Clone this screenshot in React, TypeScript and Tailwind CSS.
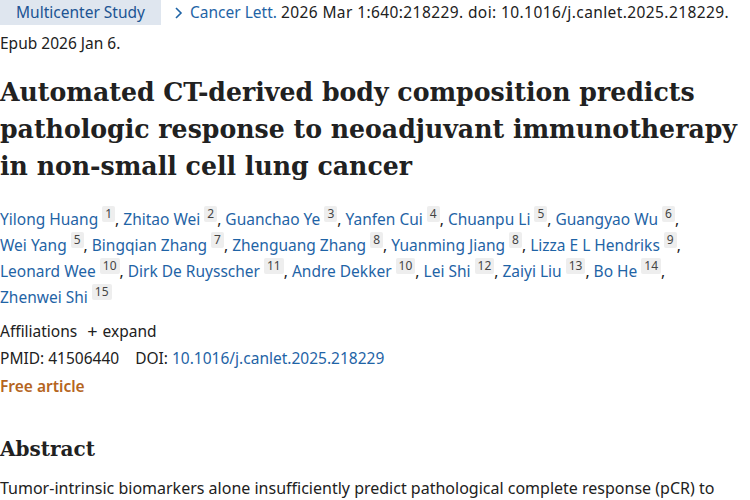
import React from "react";

const authors: [string, string][] = [
  ["Yilong Huang", "1"],
  ["Zhitao Wei", "2"],
  ["Guanchao Ye", "3"],
  ["Yanfen Cui", "4"],
  ["Chuanpu Li", "5"],
  ["Guangyao Wu", "6"],
  ["Wei Yang", "5"],
  ["Bingqian Zhang", "7"],
  ["Zhenguang Zhang", "8"],
  ["Yuanming Jiang", "8"],
  ["Lizza E L Hendriks", "9"],
  ["Leonard Wee", "10"],
  ["Dirk De Ruysscher", "11"],
  ["Andre Dekker", "10"],
  ["Lei Shi", "12"],
  ["Zaiyi Liu", "13"],
  ["Bo He", "14"],
  ["Zhenwei Shi", "15"],
];

const lines = [authors.slice(0, 6), authors.slice(6, 11), authors.slice(11, 17), authors.slice(17)];

function Author({ name, sup, last }: { name: string; sup: string; last: boolean }) {
  return (
    <span className="whitespace-nowrap">
      <span className="text-[#1f64a6]">{name}</span>{" "}
      <span className="relative top-[-7px] inline-block rounded-[2px] bg-[#eeeeee] px-[3px] text-[12px] leading-[16px] text-[#444]">
        {sup}
      </span>
      {last ? "" : ","}
    </span>
  );
}

export default function App() {
  return (
    <div className="h-[500px] w-[750px] overflow-hidden bg-white font-['Noto_Sans',sans-serif] text-[15.5px] text-[#212121]">
      <div className="flex h-[25px] items-center whitespace-nowrap">
        <span className="flex h-[25px] w-[161px] items-center justify-center bg-[#dfe6ef] text-[#205493]">
          Multicenter Study
        </span>
        <span className="ml-[13px] flex items-center">
          <svg width="10" height="14" viewBox="0 0 10 14" className="mr-[6px]">
            <path d="M2 2 L7 7 L2 12" fill="none" stroke="#1f64a6" strokeWidth="1.6" />
          </svg>
          <span className="text-[#1f64a6]">Cancer Lett.</span>
          <span className="ml-[4px] tracking-[0.4px]">2026 Mar 1:640:218229. doi: 10.1016/j.canlet.2025.218229.</span>
        </span>
      </div>
      <div className="mt-[7px] leading-[22px]">Epub 2026 Jan 6.</div>

      <h1 className="mt-[20px] whitespace-nowrap font-['DejaVu_Serif',serif] text-[25.2px] font-bold leading-[37px] text-[#212121]">
        Automated CT-derived body composition predicts
        <br />
        pathologic response to neoadjuvant immunotherapy
        <br />
        in non-small cell lung cancer
      </h1>

      <div className="mt-[21px] leading-[26px]">
        {lines.map((ln, i) => (
          <div key={i} className="whitespace-nowrap">
            {ln.map(([n, s], j) => {
              const isLast = i === lines.length - 1 && j === ln.length - 1;
              return (
                <React.Fragment key={j}>
                  <Author name={n} sup={s} last={isLast} />
                  {j < ln.length - 1 ? " " : ""}
                </React.Fragment>
              );
            })}
          </div>
        ))}
      </div>

      <div className="mt-[10px] flex items-center leading-[22px]">
        <span>Affiliations</span>
        <span className="ml-[10px] mr-[5px] text-[18px] leading-[18px]">+</span>
        <span>expand</span>
      </div>
      <div className="mt-[5px] leading-[22px]">
        PMID: 41506440<span className="ml-[16px]">DOI: </span>
        <span className="text-[#1f64a6]">10.1016/j.canlet.2025.218229</span>
      </div>
      <div className="mt-[6px] font-semibold leading-[22px] text-[#b5651d]">Free article</div>

      <h2 className="mt-[38px] font-['DejaVu_Serif',serif] text-[20px] font-bold leading-[28px]">Abstract</h2>
      <p className="mt-[14px] whitespace-nowrap text-[16px] leading-[22px]">
        Tumor-intrinsic biomarkers alone insufficiently predict pathological complete response (pCR) to
      </p>
    </div>
  );
}
